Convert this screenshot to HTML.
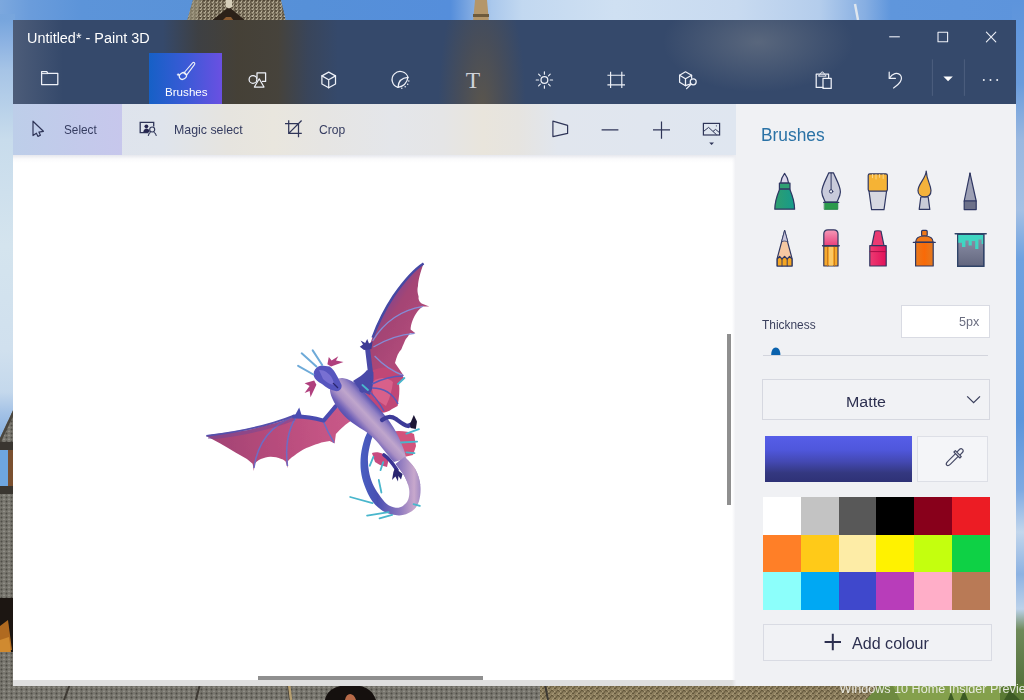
<!DOCTYPE html>
<html lang="en">
<head>
<meta charset="utf-8">
<title>Untitled* - Paint 3D</title>
<style>
*{box-sizing:border-box;margin:0;padding:0}
html,body{width:1024px;height:700px;overflow:hidden;background:#5e95d8;font-family:"Liberation Sans",sans-serif}
#desk{position:absolute;left:0;top:0;width:1024px;height:700px;overflow:hidden}
#bg{position:absolute;left:0;top:0}
#wm{position:absolute;left:839.5px;top:682.3px;color:#f2f3ee;font-size:12.6px;white-space:nowrap;opacity:.9}
#win{position:absolute;left:13px;top:20px;width:1003px;height:666px;overflow:hidden;background:#fff}
#pc{position:absolute;left:-13px;top:-20px;width:1024px;height:700px}
#pc>*{position:absolute}
#hdr{left:13px;top:20px;width:1003px;height:84px;overflow:hidden;background:linear-gradient(90deg,rgba(66,62,54,0) 150px,rgba(64,62,58,.8) 185px,rgba(70,64,52,.95) 225px,rgba(72,66,54,.9) 265px,rgba(62,64,70,.45) 295px,rgba(53,73,107,0) 325px),radial-gradient(ellipse 44px 150px at 469px 92px,rgba(104,90,66,.75),rgba(90,82,72,.5) 50%,rgba(70,76,90,0) 100%),radial-gradient(ellipse 95px 50px at 745px 22px,rgba(125,132,142,.5),rgba(90,100,120,0) 100%),linear-gradient(90deg,rgba(100,112,135,.5),rgba(70,88,118,0) 50px),#35496b}
#tab{left:149px;top:53px;width:73px;height:51px;background:linear-gradient(90deg,#1660c6 0%,#3a5ad6 50%,#6a50e2 100%)}
#sub{left:13px;top:104px;width:723px;height:51px;background:linear-gradient(90deg,#dde3ee 0,#dfe4ec 150px,#e6e4df 215px,#e9e6de 260px,#e6e5e3 310px,#e4e6ea 380px,#e5e5e6 430px,#e9e5dc 470px,#e6e4e0 505px,#e1e6ee 545px,#dfe6f0 723px)}
#sel{left:13px;top:104px;width:109px;height:51px;background:linear-gradient(90deg,#bdcee9,#c7c7ec)}
#canvas{left:13px;top:155px;width:723px;height:531px;background:#fff}
#panel{left:736px;top:104px;width:280px;height:582px;background:#f0f1f4}
.box{border:1px solid #d9dbe3}
.tx{white-space:nowrap;transform-origin:0 0;line-height:normal;display:block}
#ov{left:0;top:0;pointer-events:none}
</style>
</head>
<body>
<div id="desk">
<svg id="bg" width="1024" height="700" viewBox="0 0 1024 700">
<defs>
<linearGradient id="topg" x1="0" y1="0" x2="1024" y2="0" gradientUnits="userSpaceOnUse">
<stop offset="0" stop-color="#7ca8de"/><stop offset=".03" stop-color="#6a9cdb"/><stop offset=".08" stop-color="#5c94d9"/><stop offset=".3" stop-color="#5690d8"/><stop offset=".44" stop-color="#558edb"/><stop offset=".462" stop-color="#84ace2"/><stop offset=".48" stop-color="#aac8ec"/><stop offset=".51" stop-color="#c2d8f0"/><stop offset=".6" stop-color="#cfe0f2"/><stop offset=".72" stop-color="#c8daf0"/><stop offset=".8" stop-color="#b4cdec"/><stop offset=".845" stop-color="#86aee2"/><stop offset=".87" stop-color="#5f96dc"/><stop offset="1" stop-color="#5d94dc"/>
</linearGradient>
<linearGradient id="leftg" x1="0" y1="0" x2="0" y2="700" gradientUnits="userSpaceOnUse">
<stop offset="0" stop-color="#76a4dc"/><stop offset=".03" stop-color="#78a6dd"/><stop offset=".06" stop-color="#8cb2e2"/><stop offset=".1" stop-color="#a6c4e6"/><stop offset=".2" stop-color="#c8dcec"/><stop offset=".35" stop-color="#d4e4ee"/><stop offset=".5" stop-color="#d0e0ee"/><stop offset=".56" stop-color="#c4d8ec"/><stop offset=".59" stop-color="#a4c2e6"/><stop offset=".62" stop-color="#8ab2e0"/>
</linearGradient>
<linearGradient id="rightg" x1="0" y1="0" x2="0" y2="700" gradientUnits="userSpaceOnUse">
<stop offset="0" stop-color="#5d94dc"/><stop offset=".12" stop-color="#6a9cdc"/><stop offset=".2" stop-color="#9ab8e0"/><stop offset=".3" stop-color="#a4c0e4"/><stop offset=".37" stop-color="#6ea2e0"/><stop offset=".6" stop-color="#5c96dc"/><stop offset=".7" stop-color="#7eaae2"/><stop offset=".76" stop-color="#c2d6ec"/><stop offset=".82" stop-color="#8cb2e2"/><stop offset=".87" stop-color="#bcd2ea"/><stop offset=".9" stop-color="#6f8a5a"/><stop offset="1" stop-color="#4e6a34"/>
</linearGradient>
<pattern id="tiles" width="5" height="4" patternUnits="userSpaceOnUse"><rect width="5" height="4" fill="#78766e"/><circle cx="1.5" cy="1.5" r="1" fill="#4e4c46"/><circle cx="4" cy="3.5" r=".9" fill="#93918a"/></pattern>
<pattern id="shing" width="4" height="3.4" patternUnits="userSpaceOnUse"><rect width="4" height="3.4" fill="#857b66"/><path d="M0 0L2 2.4L4 0" stroke="#4a4030" stroke-width="1.1" fill="none"/><path d="M0 3.4L2 1" stroke="#cfc6ae" stroke-width=".9" fill="none"/></pattern>
<pattern id="tiles2" width="6" height="5" patternUnits="userSpaceOnUse"><rect width="6" height="5" fill="#8c7e5e"/><path d="M0 0L3 4L6 0" stroke="#5e5238" stroke-width="1" fill="none"/><path d="M0 5L3 1" stroke="#b8a884" stroke-width=".8" fill="none"/></pattern>
</defs>
<rect width="1024" height="700" fill="#5c94da"/>
<rect width="1024" height="22" fill="url(#topg)"/>
<rect y="14" width="15" height="686" fill="url(#leftg)"/>
<rect x="1012" y="0" width="12" height="700" fill="url(#rightg)"/>
<!-- tower roof top -->
<path d="M193 0L187 21H286L281 0Z" fill="url(#shing)"/>
<path d="M193 0L187 21H196L201 0Z" fill="#9a927c" opacity=".6"/>
<path d="M229 7L211 21H246Z" fill="#2c2118"/>
<path d="M226 17L222 21H234L231 17Z" fill="#8a5a30"/>
<path d="M226 0H232V7L229 8.5L226 7Z" fill="#d6cfba"/>
<!-- spire -->
<path d="M475 0H487L489 22H473Z" fill="#b4966a"/>
<path d="M473 14H489V17H473Z" fill="#6e5a3c"/>
<path d="M855 4L858 20" stroke="#dfe6ee" stroke-width="2.5"/>
<!-- left roof -->
<path d="M16 404L0 438V700H16Z" fill="url(#tiles)"/>
<path d="M16 404L0 438V444L16 410Z" fill="#4a463e"/>
<path d="M0 446H14V490H0Z" fill="#6ea6e0"/>
<path d="M8 446H13V490H8Z" fill="#7a5030"/>
<path d="M0 442H16V450H0ZM0 486H16V494H0Z" fill="#3a3630"/>
<path d="M0 598H16V652H0Z" fill="#1c1612"/>
<path d="M0 626L8 620L12 650H0Z" fill="#b06a20"/>
<path d="M0 640L9 637L11 652H0Z" fill="#d08a30"/>
<!-- bottom strip -->
<rect x="0" y="684" width="560" height="16" fill="url(#tiles)"/>
<rect x="540" y="684" width="350" height="16" fill="url(#tiles2)"/>
<path d="M325 700C327 688 340 685 350 685C362 685 372 688 376 700Z" fill="#15100e"/>
<path d="M345 700C346 692 354 692 356 700Z" fill="#b86a48"/>
<path d="M70 684L64 700M200 684L196 700M288 684L290 700M545 684L548 700" stroke="#3e3a34" stroke-width="2"/>
<path d="M289 684L291 700" stroke="#b8a070" stroke-width="2.5"/>
<rect x="880" y="684" width="144" height="16" fill="#84a04c"/><rect x="1000" y="684" width="24" height="16" fill="#5a7a34"/>
<path d="M880 684L866 700H900L892 684Z" fill="#6e8a40"/>
<path d="M948 700L951 692L954 700ZM960 700L964 690L968 700ZM1004 700L1010 690L1020 700Z" fill="#3c5a24"/>
</svg>
<div id="wm">Windows 10 Home Insider Preview</div>
<div id="win"><div id="pc">
 <div id="hdr"></div>
 <div id="tab"></div>
 <div id="sub"></div><div id="sel"></div>
 <div id="canvas"></div>
 <div style="left:13px;top:155px;width:723px;height:8px;background:linear-gradient(180deg,rgba(214,216,226,.6),rgba(240,240,244,.3) 50%,rgba(255,255,255,0))"></div>
 <div style="left:13px;top:680px;width:723px;height:6px;background:#dfdfdf"></div>
 <div style="left:258px;top:676px;width:224.5px;height:4px;background:#8f8f8f"></div>
 <div style="left:727px;top:333.6px;width:4.2px;height:171px;background:#8f8f8f"></div>
 <div id="panel"></div>
 <div style="left:732px;top:155px;width:4px;height:531px;background:linear-gradient(90deg,rgba(240,241,244,0),rgba(238,239,243,1))"></div>
 <div class="box" style="left:901px;top:305px;width:89px;height:33px;background:#fff"></div>
 <div style="left:763px;top:355px;width:225px;height:1px;background:#d3d5dd"></div>
 <div class="box" style="left:762px;top:379px;width:228px;height:41px;background:#f1f2f5;border-color:#d6d8e0"></div>
 <div style="left:764.5px;top:436px;width:147.5px;height:45.5px;background:linear-gradient(180deg,#565ee8 0%,#4f57dc 30%,#4449b4 55%,#343880 80%,#2e3176 100%)"></div>
 <div class="box" style="left:917px;top:436px;width:71px;height:45.5px;background:#f4f5f8;border-color:#dddfe6"></div>
 <div class="box" style="left:762.5px;top:623.5px;width:229px;height:37px;background:#f1f2f5;border-color:#d9dbe3"></div>
<div style="left:762.9px;top:496.8px;width:38.1px;height:38.0px;background:#ffffff"></div>
 <div style="left:800.7px;top:496.8px;width:38.1px;height:38.0px;background:#c3c3c3"></div>
 <div style="left:838.5px;top:496.8px;width:38.1px;height:38.0px;background:#585858"></div>
 <div style="left:876.3px;top:496.8px;width:38.1px;height:38.0px;background:#000000"></div>
 <div style="left:914.1px;top:496.8px;width:38.1px;height:38.0px;background:#88001b"></div>
 <div style="left:951.9px;top:496.8px;width:38.1px;height:38.0px;background:#ec1c24"></div>
 <div style="left:762.9px;top:534.5px;width:38.1px;height:38.0px;background:#ff7f27"></div>
 <div style="left:800.7px;top:534.5px;width:38.1px;height:38.0px;background:#ffca18"></div>
 <div style="left:838.5px;top:534.5px;width:38.1px;height:38.0px;background:#fdeca6"></div>
 <div style="left:876.3px;top:534.5px;width:38.1px;height:38.0px;background:#fff200"></div>
 <div style="left:914.1px;top:534.5px;width:38.1px;height:38.0px;background:#c4ff0e"></div>
 <div style="left:951.9px;top:534.5px;width:38.1px;height:38.0px;background:#0ed145"></div>
 <div style="left:762.9px;top:572.2px;width:38.1px;height:38.0px;background:#8cfffb"></div>
 <div style="left:800.7px;top:572.2px;width:38.1px;height:38.0px;background:#00a8f3"></div>
 <div style="left:838.5px;top:572.2px;width:38.1px;height:38.0px;background:#3f48cc"></div>
 <div style="left:876.3px;top:572.2px;width:38.1px;height:38.0px;background:#b83dba"></div>
 <div style="left:914.1px;top:572.2px;width:38.1px;height:38.0px;background:#ffaec8"></div>
 <div style="left:951.9px;top:572.2px;width:38.1px;height:38.0px;background:#b97a56"></div>
<!--TX_S-->
 <span class="tx" id="title" style="left:26.6px;top:30.23px;font-size:14.0px;color:#fff;transform:scaleX(1.0297)">Untitled* - Paint 3D</span>
 <span class="tx" id="tabl" style="left:164.5px;top:85.00px;font-size:11.6px;color:#fff;transform:scaleX(1.0016)">Brushes</span>
 <span class="tx" id="t_sel" style="left:64.3px;top:122.32px;font-size:12.8px;color:#353c60;transform:scaleX(0.9191)">Select</span>
 <span class="tx" id="t_mag" style="left:173.8px;top:122.32px;font-size:12.8px;color:#353c60;transform:scaleX(0.9659)">Magic select</span>
 <span class="tx" id="t_crop" style="left:319.4px;top:122.32px;font-size:12.8px;color:#353c60;transform:scaleX(0.9441)">Crop</span>
 <span class="tx" id="ph" style="left:761.2px;top:123.61px;font-size:19.1px;color:#2a72a6;transform:scaleX(0.9094)">Brushes</span>
 <span class="tx" id="t_th" style="left:762.3px;top:317.05px;font-size:13.2px;color:#3a3f5c;transform:scaleX(0.9027)">Thickness</span>
 <span class="tx" id="t_5" style="left:959.0px;top:314.24px;font-size:13.0px;color:#6b6e80;transform:scaleX(0.9681)">5px</span>
 <span class="tx" id="t_mat" style="left:845.7px;top:392.56px;font-size:15.4px;color:#2d3050;transform:scaleX(1.0390)">Matte</span>
 <span class="tx" id="t_add" style="left:851.5px;top:634.14px;font-size:16.2px;color:#2d3050;transform:scaleX(0.9937)">Add colour</span>
<!--TX_E-->
 <svg id="ov" width="1024" height="700" viewBox="0 0 1024 700">
 <!--DRAGON_S--><defs>
<filter id="soft" x="-5%" y="-5%" width="110%" height="110%"><feGaussianBlur stdDeviation="0.6"/></filter>
<linearGradient id="rw" gradientUnits="userSpaceOnUse" x1="380" y1="300" x2="420" y2="325"><stop offset="0" stop-color="#4a48a4"/><stop offset=".14" stop-color="#86468c"/><stop offset=".4" stop-color="#a44474"/><stop offset="1" stop-color="#b04a7a"/></linearGradient>
<linearGradient id="lw" gradientUnits="userSpaceOnUse" x1="206" y1="436" x2="350" y2="420"><stop offset="0" stop-color="#a04274"/><stop offset=".4" stop-color="#b44a7a"/><stop offset=".8" stop-color="#c45484"/><stop offset="1" stop-color="#c85a88"/></linearGradient>
<linearGradient id="bd" gradientUnits="userSpaceOnUse" x1="365" y1="385" x2="337" y2="411"><stop offset="0" stop-color="#4244a6"/><stop offset=".14" stop-color="#5450b0"/><stop offset=".3" stop-color="#9482c4"/><stop offset=".5" stop-color="#c0a6cc"/><stop offset=".68" stop-color="#aa90c4"/><stop offset=".84" stop-color="#6e60b8"/><stop offset="1" stop-color="#4a48ac"/></linearGradient>
<linearGradient id="tl" gradientUnits="userSpaceOnUse" x1="358" y1="480" x2="424" y2="480"><stop offset="0" stop-color="#4a60c4"/><stop offset=".3" stop-color="#4a50b2"/><stop offset=".62" stop-color="#8a76be"/><stop offset=".85" stop-color="#c8a8cc"/><stop offset="1" stop-color="#8e7cc0"/></linearGradient>
<linearGradient id="mfade" gradientUnits="userSpaceOnUse" x1="392" y1="446" x2="404" y2="462"><stop offset="0" stop-color="#000"/><stop offset="1" stop-color="#fff"/></linearGradient><mask id="clipTail" maskUnits="userSpaceOnUse" x="380" y="440" width="50" height="45"><rect x="380" y="440" width="50" height="45" fill="url(#mfade)"/></mask>
</defs>
<g filter="url(#soft)">
<!-- right wing upper -->
<path d="M423.6 263.6C414 270 404 282 394.3 295C386 307 379 321 373 336C371 341 369.6 346 368.6 352L370 374L392 378L403.8 375.8L395 363C396.5 357 398.5 352 401.4 349.3C403 345 404.5 342 405.7 339.3C407.4 337.4 409 335 410 333L415.4 333.3L410.6 329.6C410.8 324 413.5 317 417.1 312.1C419 309.6 421 308 422.9 306.6L429.3 306.4L421.6 303.6C419 301.6 418.2 299 418.6 296.4C417 291 417.5 288 417.9 286.4C418.5 279 420 273.6 423.6 263.6Z" fill="url(#rw)"/>
<!-- right wing lower pink part -->
<path d="M368 374C374 368 386 366 394 369C399 372 402 376 404.4 378.4L399 383C400 390 399 398 397.6 406L392 409C388 412 384 413 381 412.6L364 392Z" fill="#c04676"/>
<path d="M371 384C376 377 386 376 393 382C392 390 390 398 386 406L374 398Z" fill="#d8608a"/>
<!-- right wing finger bones -->
<path d="M372.6 341C384 322 402 310 423 306.4M373.4 347C388 338 400 334.5 414.6 333.3M374.6 356C384 366 394 372 403.6 375.6" fill="none" stroke="#848cd6" stroke-width="1.3"/>
<path d="M423.6 263.6C412 271 402 284 393.6 296C385 309 378 323 372.6 337.6" fill="none" stroke="#4448a4" stroke-width="2.4"/>
<!-- left wing -->
<path d="M206.3 435.9C212 434.6 218 433.8 223.4 433.3C231 432.4 239 431.4 246.9 430.2C253 429 260 427 265.6 425.5C272 424 278 422.4 282.8 420.8C287 419 291 417.4 293.8 415.3L301.6 415.3C305 415.8 309 416.2 312.5 416.9L323.4 420L334.4 404.4L351.6 420.8C348 422.4 346 424.4 343.8 426.3C340.6 429 338 431.6 335.9 434.1L334.6 443.6L329.7 441.1C326 441.6 322 442.4 318.8 443.4C314 444.6 310 446.4 306.3 448.1C301.6 450.4 297.6 453 293.8 455.9C291 457.6 289 459.4 287.8 461.4L287.5 467.9L285.6 461.4C284 460 282.6 459.4 281.3 459.1C277.6 457.4 274 456.6 270.3 456.7C267 456.9 264 457.8 260.9 459.1C258 460.4 256 462 254.6 463.8L253.9 471L252.6 463.8C250.6 462 248.6 460.4 246.9 459.1C243 457 239.4 454.8 235.9 452.8C230.6 449.6 225.4 446.4 220.3 443.4C215.6 440.8 211 438.4 206.3 435.9Z" fill="url(#lw)"/>
<path d="M294 416.5C274 424 258 440 253.9 468M296 417C288 430 285 446 287.5 466M323 420.6C326 428 330 436 334 442.6" fill="none" stroke="#6e6cc4" stroke-width="1.5"/>
<path d="M208 437.4C238 434 269 428 294.4 418" fill="none" stroke="#6a469c" stroke-width="5" opacity=".45" filter="url(#soft)"/>
<path d="M206.3 435.9C236 432.4 268 426 293.8 415.6" fill="none" stroke="#5450ac" stroke-width="1.8"/>
<!-- left arm -->
<path d="M294 416.6C304 416.4 314 418 323.6 420.6L336 406" fill="none" stroke="#4a4cb0" stroke-width="4" stroke-linejoin="round" stroke-linecap="round"/>
<path d="M294.6 416L299.2 407.6L301.6 415Z" fill="#4a4cb0"/>
<!-- tail -->
<path d="M404.6 456.8C406.4 458.9 412.8 464.5 415.4 469.3C418.0 474.1 419.8 480.0 420.4 485.4C421.0 490.8 420.3 497.1 418.9 501.4C417.5 505.7 415.1 509.0 411.8 511.3C408.5 513.6 403.8 515.3 399.3 515.4C394.8 515.5 389.5 514.4 385.0 512.1C380.5 509.8 375.9 505.8 372.5 501.4C369.1 496.9 366.4 490.4 364.5 485.4C362.6 480.3 361.5 476.2 360.9 471.1C360.3 466.0 360.3 460.4 360.9 455.0C361.5 449.6 363.0 443.4 364.5 438.9C366.0 434.4 368.9 430.0 369.8 428.2L374.4 431.8C373.8 433.6 371.8 438.3 370.7 442.5C369.6 446.7 368.3 452.0 368.0 456.8C367.7 461.6 368.1 466.6 368.9 471.1C369.6 475.6 370.9 479.7 372.5 483.6C374.1 487.5 376.4 490.9 378.8 494.3C381.2 497.7 384.0 501.9 386.8 504.1C389.6 506.3 393.0 507.4 395.7 507.7C398.4 508.0 400.8 507.2 402.9 505.9C405.0 504.5 407.2 502.4 408.2 499.6C409.2 496.8 409.7 492.8 409.1 488.9C408.5 485.0 406.8 480.6 404.6 476.4C402.4 472.2 397.2 466.0 395.7 463.9Z" fill="url(#tl)"/>
<!-- rear fins -->
<path d="M390 432C398 430 408 431 414 434L416 446L413 455L404 457L392 446Z" fill="#d2527c"/>
<path d="M372 453C378 451 385 454 389 458L387 467L380 465L375 462Z" fill="#c84c80"/>
<!-- body -->
<path d="M335.4 379.0C336.6 378.8 340.0 377.7 342.7 378.0C345.4 378.3 348.6 379.5 351.5 381.0C354.4 382.5 357.1 384.3 360.0 387.0C362.9 389.7 365.7 393.7 368.6 397.0C371.5 400.3 374.5 403.3 377.4 406.6C380.3 409.9 383.5 413.5 386.2 417.0C388.9 420.5 391.4 424.0 393.5 427.5C395.6 431.0 397.2 434.2 399.0 438.0C400.8 441.8 402.8 446.6 404.0 450.0C405.2 453.4 406.0 457.2 406.4 458.6L393.9 462.1C392.4 460.3 388.0 455.0 385.0 451.4C382.0 447.8 379.1 443.8 376.1 440.7C373.1 437.6 370.2 434.9 367.0 432.5C363.8 430.1 360.3 428.3 357.0 426.0C353.7 423.7 350.1 421.5 347.0 418.6C343.9 415.7 340.6 411.9 338.3 408.8C336.0 405.7 334.4 403.0 333.0 400.0C331.6 397.0 330.3 393.7 330.0 391.0C329.7 388.3 330.8 385.2 331.0 384.0Z" fill="url(#bd)"/>
<g mask="url(#clipTail)"><path d="M404.6 456.8C406.4 458.9 412.8 464.5 415.4 469.3C418.0 474.1 419.8 480.0 420.4 485.4C421.0 490.8 420.3 497.1 418.9 501.4C417.5 505.7 415.1 509.0 411.8 511.3C408.5 513.6 403.8 515.3 399.3 515.4C394.8 515.5 389.5 514.4 385.0 512.1C380.5 509.8 375.9 505.8 372.5 501.4C369.1 496.9 366.4 490.4 364.5 485.4C362.6 480.3 361.5 476.2 360.9 471.1C360.3 466.0 360.3 460.4 360.9 455.0C361.5 449.6 363.0 443.4 364.5 438.9C366.0 434.4 368.9 430.0 369.8 428.2L374.4 431.8C373.8 433.6 371.8 438.3 370.7 442.5C369.6 446.7 368.3 452.0 368.0 456.8C367.7 461.6 368.1 466.6 368.9 471.1C369.6 475.6 370.9 479.7 372.5 483.6C374.1 487.5 376.4 490.9 378.8 494.3C381.2 497.7 384.0 501.9 386.8 504.1C389.6 506.3 393.0 507.4 395.7 507.7C398.4 508.0 400.8 507.2 402.9 505.9C405.0 504.5 407.2 502.4 408.2 499.6C409.2 496.8 409.7 492.8 409.1 488.9C408.5 485.0 406.8 480.6 404.6 476.4C402.4 472.2 397.2 466.0 395.7 463.9Z" fill="url(#tl)"/></g>
<!-- shoulder -->
<path d="M353 381C358 378 364 374 367 370L373.4 372C374 380 373 388 370 395L361 391Z" fill="#4a4aa8"/>
<path d="M372 384C380 380 390 376 403 376M372 388C382 388 392 392 398 404M370 392C376 398 380 404 384 411" fill="none" stroke="#5a58b8" stroke-width="1.5"/>
<!-- right arm -->
<path d="M362 390C366 384 369 378 370.4 372C369.4 364 368.4 356 367.6 349" fill="none" stroke="#4848a6" stroke-width="5" stroke-linecap="round" stroke-linejoin="round"/>
<path d="M364 350L359.8 346.8L363 344.6L360.6 340.6L365.2 343L367.2 339L369 343.6L372.6 341.6L371.4 349Z" fill="#3c3a94"/>
<!-- right leg -->
<path d="M382 420C387 416 392 416.4 396 419C400 422 404 425.4 408 426L412.4 424" fill="none" stroke="#3c3a98" stroke-width="4.2" stroke-linecap="round"/>
<path d="M410 424L413.8 415L417 421.4L415.8 429L410.6 428Z" fill="#1c1636"/>
<!-- rear lower leg -->
<path d="M384 455C389 458 393 464 397 470" fill="none" stroke="#3a3494" stroke-width="3.6" stroke-linecap="round"/>
<path d="M395 468L402.6 474L401 479.6L398.4 476L398 481.4L395.4 476.4L392 480L393.4 472Z" fill="#2c2670"/>
<!-- head -->
<path d="M313.8 372C315 368 318 366 321.4 365.4L329.6 366.6C333 369 335.6 373 337.6 377L341.6 385C342 388.6 340 391 336.6 391.2C331 390.6 326 387.6 322 384C317.6 381.6 314.6 379 313.8 376Z" fill="#5654be"/>
<path d="M319 370C324 369.6 329 373 332 378L335 385C331 385 326 382 323 379Z" fill="#7870d2"/>
<path d="M333 383L338 388" stroke="#2c2870" stroke-width="1.2" fill="none"/>
<!-- crest fins -->
<path d="M327.4 364.3L328.8 357L331.6 360.4L338.3 356.2L336 360.6L343.5 362.1L331 366.5Z" fill="#b0407e"/>
<path d="M314.2 380.4L304.6 383.3L309.6 386L304.6 392.9L309.6 391L310.5 397.3L316.4 384.8Z" fill="#b0407e"/>
<!-- horns -->
<path d="M301.7 353.3L316.4 366.5M312.7 350.4L322.2 365M298.1 365.8L313.4 374.5" fill="none" stroke="#6eaad8" stroke-width="2" stroke-linecap="round"/>
<!-- cyan spikes -->
<path d="M406.4 433.6L418.9 429.1M401 442.5L417.1 441.6M406.4 452.3L414.5 453.2M373.4 456.8L369.8 465.7M383.2 462.1L380.5 470.2M378.8 480L381.4 492.5M350.2 497L372.5 503.2M367.1 515.7L388.6 512.1M379.6 518.4L392.1 514.8M413.6 504.1L419.8 505.9M362.4 385L368 390M398 384L404.4 378" fill="none" stroke="#48b6cc" stroke-width="1.8" stroke-linecap="round"/>
</g>
<!--DRAGON_E-->
 <!--HDRICONS_S--><g fill="none" stroke="#eef1f8" stroke-width="1.25" stroke-linejoin="round" stroke-linecap="round">
<!-- window controls -->
<path d="M889.2 36.8H899.8" stroke-width="1.1" stroke-linecap="butt"/>
<rect x="938" y="32.3" width="9.6" height="9.4" stroke-width="1.1"/>
<path d="M986.4 32.2L995.8 41.8M995.8 32.2L986.4 41.8" stroke-width="1.1"/>
<!-- folder -->
<path d="M41.6 71.6H46.8L47.8 73.4H57.8V84.6H41.6Z"/>
<path d="M41.6 73.6H47.6" stroke-width="1"/>
<!-- brush -->
<path d="M192.8 62.6C193.8 61.8 195.4 63.2 194.6 64.4L186.6 75.2L183.8 73Z" stroke-width="1.1"/>
<ellipse cx="182.9" cy="76" rx="3.7" ry="3.1" transform="rotate(-35 182.9 76)" stroke-width="1.2"/>
<circle cx="178.2" cy="74.6" r="0.9" fill="#eef1f8" stroke-width="0.6"/>
<!-- 2d shapes -->
<circle cx="253" cy="79.4" r="3.9"/>
<path d="M257 78V72.8H265.6V81.4H262.4"/>
<path d="M259.2 78.8L264 87H254.4Z"/>
<!-- cube -->
<path d="M328.7 72.1L335.5 75.9V84L328.7 87.8L321.9 84V75.9Z"/>
<path d="M321.9 75.9L328.7 79.8L335.5 75.9M328.7 79.8V87.8"/>
<!-- sticker -->
<path d="M398 87.4A8.1 8.1 0 1 1 408 77.4"/>
<path d="M408 77.4C401.5 77.8 398.2 81.5 398 87.4C403.5 86.4 407 83 408 77.4Z"/>
<path d="M408.8 81L408.8 81.01M407.7 84.3L407.7 84.31M405.2 86.7L405.2 86.71M401.8 88.2L401.8 88.21" stroke-width="1.5"/>
<!-- sun -->
<circle cx="544.4" cy="80" r="3.4"/>
<path d="M544.4 71.8V74.2M544.4 85.8V88.2M536.2 80H538.6M550.2 80H552.6M538.6 74.2L540.3 75.9M548.5 84.1L550.2 85.8M550.2 74.2L548.5 75.9M540.3 84.1L538.6 85.8" stroke-width="1.15"/>
<!-- canvas -->
<path d="M610.6 71.8V88M621.8 71.8V88M607.4 75.2H625M607.4 84.8H625" stroke-width="1.15" stroke-linecap="butt"/>
<!-- 3d library -->
<path d="M689.9 84.2L685.5 85.7L679.6 82.2V75.2L685.5 71.8L691.6 75.2V78.2"/>
<path d="M679.6 75.2L685.5 78.8L691.6 75.2M685.5 78.8V85.7"/>
<circle cx="693.2" cy="81.8" r="3"/>
<path d="M691 84.2L686.6 88.6"/>
<!-- paste -->
<path d="M823 87.4H816.2V74.2H828.6V78.2"/>
<path d="M818.6 75.8C819.4 74.4 820.4 74.4 820.8 73.2C821.2 71.6 823.4 71.6 823.8 73.2C824.2 74.4 825.2 74.4 826 75.8Z" stroke-width="1"/>
<rect x="823" y="78.3" width="8.2" height="10.1"/>
<!-- undo -->
<path d="M889.2 72.2V78.4H895.4" stroke-width="1.2"/>
<path d="M889.6 78C892 73.6 897.6 71.6 900.4 75.2C903.6 79.4 899 84.4 893.6 88" stroke-width="1.2"/>
<!-- separators -->
<path d="M932.4 59.4V95.8M964.4 59.4V95.8" stroke="#4e607f" stroke-width="1" stroke-linecap="butt"/>
<path d="M943.4 76.6H952.8L948.1 81.2Z" fill="#fff" stroke="none"/>
<circle cx="983.8" cy="80" r="1" fill="#eef1f8" stroke="none"/><circle cx="990.5" cy="80" r="1" fill="#eef1f8" stroke="none"/><circle cx="997.2" cy="80" r="1" fill="#eef1f8" stroke="none"/>
</g>
<text x="472.9" y="88" font-family="Liberation Serif, serif" font-size="23.6" fill="#eef1f8" fill-opacity=".82" text-anchor="middle">T</text>
<!--HDRICONS_E-->
 <!--SUBICONS_S--><g fill="none" stroke="#2f3558" stroke-width="1.2" stroke-linejoin="miter" stroke-linecap="butt">
<!-- cursor -->
<path d="M33 121.2V135.6L36.4 133.2L38 136.4L40.4 135.3L38.9 132.1L43.4 131.3Z" stroke-linejoin="round"/>
<!-- magic select -->
<path d="M148.4 132.6H140.2V122.3H153.7V126.6" stroke-width="1.3"/>
<circle cx="146.4" cy="126.3" r="1.9" fill="#262650" stroke="none"/>
<path d="M143.2 132.2C143.6 129.6 145 128.4 146.4 128.4C147.8 128.4 149.4 129.4 149.8 131.4L148.6 132.2Z" fill="#262650" stroke="none"/>
<circle cx="152.2" cy="129.5" r="2.5" stroke-width="1.1"/>
<path d="M148.2 135.8C148.8 133.6 149.6 132.6 150.6 132.2M153.8 132.2C154.8 132.6 155.8 133.6 156.4 135.8" stroke-width="1.1"/>
<!-- crop -->
<path d="M288.7 120.3V133.4H301.8M285 123.7H298.5V137.2M289 133.1L301.6 120.5" stroke-width="1.25"/>
<!-- 3d view -->
<path d="M552.9 121.2L567.6 125.4V133.4L552.9 136.6Z" stroke-width="1.2" stroke-linejoin="round"/>
<!-- minus, plus -->
<path d="M601.6 129.8H618.4M653 129.8H670M661.5 121.6V138.8" stroke-width="1.2"/>
<!-- image -->
<rect x="703.4" y="123.4" width="16.2" height="11.6" stroke-width="1.2"/>
<path d="M703.6 131.4L708.6 127.4L716.6 134.8M713 131.4L715.6 129.4L719.4 132.6" stroke-width="1"/>
<path d="M716.4 125.4V126.4" stroke-width="0.9"/>
<path d="M709.2 142.4H714L711.6 145Z" fill="#2f3558" stroke="none"/>
</g>
<!--SUBICONS_E-->
 <!--BRUSHICONS_S--><defs>
<linearGradient id="gMk" x1="0" y1="0" x2="1" y2="0"><stop offset="0" stop-color="#2f9e6e"/><stop offset="1" stop-color="#159a8c"/></linearGradient>
<linearGradient id="gEr" x1="0" y1="0" x2="0" y2="1"><stop offset="0" stop-color="#f59ab8"/><stop offset="1" stop-color="#e8407c"/></linearGradient>
<linearGradient id="gCr" x1="0" y1="0" x2="1" y2="0"><stop offset="0" stop-color="#ee3a72"/><stop offset="1" stop-color="#e2125a"/></linearGradient>
<linearGradient id="gSp" x1="0" y1="0" x2="1" y2="0"><stop offset="0" stop-color="#e8791c"/><stop offset=".5" stop-color="#f96a08"/><stop offset="1" stop-color="#e27a20"/></linearGradient>
<linearGradient id="gBk" x1="0" y1="0" x2="0" y2="1"><stop offset="0" stop-color="#9094ab"/><stop offset="1" stop-color="#62667e"/></linearGradient>
</defs>
<g stroke="#2f3762" stroke-width="1.2" stroke-linejoin="round" stroke-linecap="round">
<!-- marker -->
<path d="M784.6 173.4C782.6 176 781 180 780.6 183.2L788.6 183.2C788.2 180 786.6 176 784.6 173.4Z" fill="#dcd8ec"/>
<rect x="779.4" y="183.2" width="10.6" height="6" fill="#2fa074"/>
<path d="M779.6 189.2C777.2 195 774.8 201 774.8 209.2L794.6 209.2C794.6 201 792.2 195 789.8 189.2Z" fill="url(#gMk)"/>
<!-- calligraphy pen -->
<path d="M828.8 172.8L833.4 172.8C836 179 840.4 186 840.4 192C840.4 196 838 199.5 836.8 202.2L825.4 202.2C824.2 199.5 821.8 196 821.8 192C821.8 186 826.2 179 828.8 172.8Z" fill="#c9cbdb"/>
<path d="M831.1 173L831.1 189.6" fill="none" stroke-width="1"/>
<circle cx="831.1" cy="191.4" r="1.7" fill="#eceef5" stroke-width="1"/>
<rect x="824.6" y="202.4" width="13.2" height="7" fill="#2c9a4c" stroke="#1f7f43" stroke-width="0.8"/>
<path d="M823.6 202.3L838.8 202.3" fill="none"/>
<!-- oil brush -->
<path d="M869 191L871.6 209.6L884 209.6L886.6 191Z" fill="#d6d8e1"/>
<rect x="868.2" y="173.8" width="19.2" height="17.2" rx="1.6" fill="#f5b335"/>
<path d="M872.5 174.5v3.2M876 174.5v4.5M879.6 174.5v2.8M883.2 174.5v4" fill="none" stroke="#fbd88a" stroke-width="1"/>
<!-- watercolour -->
<path d="M920.8 197L919.2 209.4L929.8 209.4L928.2 197Z" fill="#c9cbd7"/>
<path d="M926.2 171C926.2 178 918 184 918 190.4C918 194.4 920.8 196.8 924.6 196.8C928.4 196.8 931 194.4 931 190.4C931 185 926.8 181 926.2 171Z" fill="#f4b23c"/>
<!-- pixel pen -->
<path d="M970 173.2L964.2 201L976.2 201Z" fill="#9da0b4"/>
<path d="M970 173.2L970 175.5" fill="none"/>
<rect x="964.2" y="201" width="12" height="8.6" fill="#6d7189"/>
<!-- pencil -->
<path d="M784.6 230.6L777.2 258.4L777.2 266L792 266L792 258.4Z" fill="#f5c8a2"/>
<path d="M784.6 230.6L781.6 241.8C783.4 240.8 785.8 240.8 787.6 241.8Z" fill="#c9c6dc" stroke-width="0.8"/>
<path d="M777.2 259L779.6 256.4L782 259L784.6 256.4L787.2 259L789.6 256.4L792 259L792 266L777.2 266Z" fill="#f5a623"/>
<path d="M782 259.4V266M787.2 259.4V266" fill="none" stroke-width="0.9"/>
<!-- eraser -->
<rect x="823.8" y="246" width="14.2" height="20" fill="#f6a92c"/>
<path d="M827.6 246V266M834.4 246V266" fill="none" stroke="#c9791a" stroke-width="1"/>
<rect x="829" y="246.6" width="4" height="19" fill="#fcc964" stroke="none"/>
<path d="M823.8 245.6L823.8 234C823.8 231.4 825.6 229.8 828 229.8L833.8 229.8C836.2 229.8 838 231.4 838 234L838 245.6Z" fill="url(#gEr)"/>
<path d="M822.6 245.8L839.2 245.8" fill="none" stroke-width="1.4"/>
<!-- crayon -->
<path d="M874.8 231.2C875.4 230.6 880.4 230.6 881 231.2L884 245.6L871.8 245.6Z" fill="#ea3a72"/>
<rect x="869.8" y="245.6" width="16.4" height="20.4" fill="url(#gCr)"/>
<path d="M870 251.6L886 251.6" fill="none" stroke="#a81048" stroke-width="1"/>
<!-- spray can -->
<rect x="921.6" y="230.4" width="5.6" height="5.6" rx="1" fill="#f07818"/>
<path d="M915.6 242.4C915.6 238 919.6 236 924.4 236C929.2 236 933.2 238 933.2 242.4Z" fill="#f07818"/>
<rect x="915.6" y="242.4" width="17.6" height="23.6" fill="url(#gSp)"/>
<path d="M913.4 242.4L935.2 242.4" fill="none" stroke-width="1.4"/>
<!-- bucket -->
<rect x="957.6" y="234.4" width="26.2" height="32" fill="url(#gBk)"/>
<path d="M957.6 234.4L983.8 234.4L983.8 244L981.6 244L981.6 239.6L978.4 239.6L978.4 249L975.2 249L975.2 241L971.8 241L971.8 245.4L968.6 245.4L968.6 240.4L965.4 240.4L965.4 247L962 247L962 242.8L957.6 242.8Z" fill="#3fd6c2" stroke="none"/>
<rect x="957.6" y="234.4" width="26.2" height="32" fill="none" stroke="#2f4468"/>
<path d="M955.2 233.8L986.2 233.8" fill="none" stroke="#2f4468" stroke-width="1.5"/>
</g>
<!--BRUSHICONS_E-->
 <!--PANELSVG_S--><g>
<!-- slider thumb -->
<path d="M771.2 355C771.2 350.6 773 347.6 775.8 347.6C778.6 347.6 780.4 350.6 780.4 355Z" fill="#0a62ad"/>
<!-- chevron -->
<path d="M967.2 396.4L973.6 402.6L980 396.4" fill="none" stroke="#3a3f5c" stroke-width="1.3"/>
<!-- eyedropper -->
<g transform="translate(954.5 457.4) rotate(45)" fill="none" stroke="#464a66" stroke-width="1.2" stroke-linejoin="round">
<path d="M-2.1 -5.4L-2.1 -9.4C-2.1 -12 2.1 -12 2.1 -9.4L2.1 -5.4"/>
<path d="M-4.2 -5.4L4.2 -5.4L4.2 -3.4L-4.2 -3.4Z"/>
<path d="M-1.9 -3.4L-1.9 7.6C-1.9 9.8 -0.9 11 0 11C0.9 11 1.9 9.8 1.9 7.6L1.9 -3.4"/>
</g>
<!-- plus -->
<path d="M824.6 642H841M832.8 633.8V650.2" fill="none" stroke="#2d3050" stroke-width="2"/>
</g>
<!--PANELSVG_E-->
 </svg>
</div></div>
</div>
</body>
</html>
